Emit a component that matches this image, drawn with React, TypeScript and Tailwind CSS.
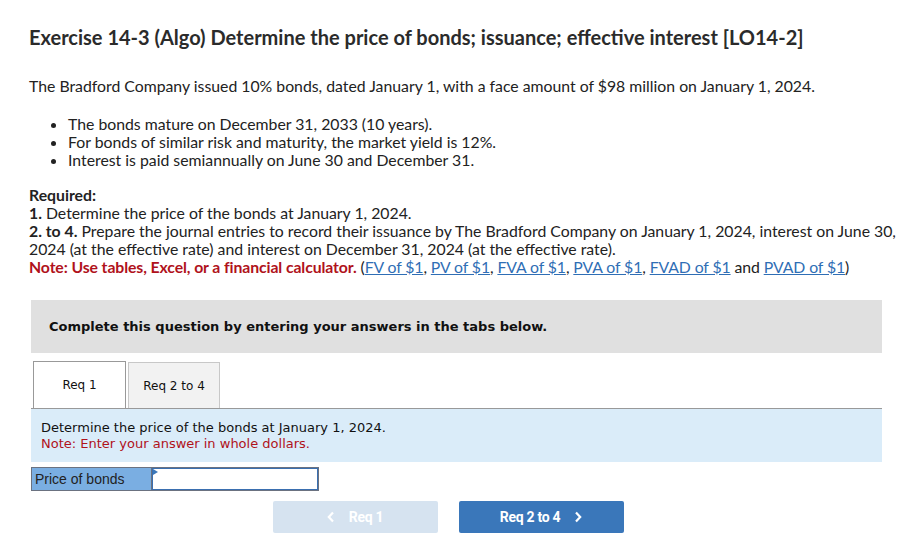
import React from 'react';

const links = ['FV of $1', 'PV of $1', 'FVA of $1', 'PVA of $1', 'FVAD of $1'];

const App: React.FC = () => {
  return (
    <div className="min-h-screen bg-white pl-[29px] pr-[10px] text-[#222] font-['Lato','Liberation_Sans',sans-serif]">
      {/* Header */}
      <h1 className="pt-[25px] text-[20px] font-bold leading-[24px] text-[#2b2b2b]">
        Exercise 14-3 (Algo) Determine the price of bonds; issuance; effective interest [LO14-2]
      </h1>

      <p className="mt-[28px] text-[15.8px] leading-[18px]">
        The Bradford Company issued 10% bonds, dated January 1, with a face amount of $98 million on January 1, 2024.
      </p>

      <ul className="mt-[20px] list-disc pl-[39px] text-[15.8px] leading-[18px]">
        <li>The bonds mature on December 31, 2033 (10 years).</li>
        <li>For bonds of similar risk and maturity, the market yield is 12%.</li>
        <li>Interest is paid semiannually on June 30 and December 31.</li>
      </ul>

      <div className="mt-[17px] text-[15.8px] leading-[18px]">
        <p className="font-bold">Required:</p>
        <p>
          <b>1.</b> Determine the price of the bonds at January 1, 2024.
        </p>
        <p>
          <b>2. to 4.</b> Prepare the journal entries to record their issuance by The Bradford Company on January 1, 2024, interest on June 30, 2024 (at the effective rate) and interest on December 31, 2024 (at the effective rate).
        </p>
        <p className="tracking-[-0.1px]">
          <b className="text-[#b0121b]">Note: Use tables, Excel, or a financial calculator.</b>{' '}
          (
          {links.map((l, i) => (
            <React.Fragment key={l}>
              <a className="text-[#2f6eb5] underline">{l}</a>
              {i < links.length - 1 ? ', ' : ''}
            </React.Fragment>
          ))}{' '}
          and <a className="text-[#2f6eb5] underline">PVAD of $1</a>)
        </p>
      </div>

      {/* Question panel */}
      <div className="ml-[2px] mr-[29px] mt-[24px] font-['DejaVu_Sans','Verdana',sans-serif]">
        <div className="flex h-[53px] items-center bg-[#e0e0e0] pl-[18px] text-[13px] font-bold text-[#111]">
          Complete this question by entering your answers in the tabs below.
        </div>

        <div className="mt-[8px] flex gap-[2px] border-b border-[#999] pl-[2px] text-[12px] text-[#111]">
          <div className="-mb-px flex h-[47px] w-[93px] items-center justify-center border border-b-0 border-[#999] bg-white">
            Req 1
          </div>
          <div className="mt-px flex h-[46px] w-[92px] items-center justify-center border border-b-0 border-[#c8c8c8] bg-[#f2f2f2]">
            Req 2 to 4
          </div>
        </div>

        <div className="bg-[#daecf9] px-[10px] pb-[10px] pt-[11px] text-[13px] leading-[16px]">
          <p className="text-[#111]">Determine the price of the bonds at January 1, 2024.</p>
          <p className="text-[#b0121b]">Note: Enter your answer in whole dollars.</p>
        </div>

        <div className="mt-[5px] flex h-[24px] w-[288px] border border-[#6b7280] font-['Liberation_Sans',Arial,sans-serif] text-[14px]">
          <div className="flex w-[120px] items-center border-r border-[#6b7280] bg-[#7aaee2] pl-[3px] text-[#222]">
            Price of bonds
          </div>
          <div className="relative flex-1 border border-[#3a6fb0] bg-white">
            <span className="absolute left-0 top-0 h-0 w-0 border-y-[3px] border-l-[5px] border-y-transparent border-l-[#3a77ba]" />
          </div>
        </div>

        <div className="mt-[10px] flex justify-center gap-[21px] pr-[17px] font-['Roboto','Liberation_Sans',sans-serif] text-[14px] font-bold text-white">
          <div className="flex h-[32px] w-[165px] items-center justify-center gap-[14px] rounded-[2px] bg-[#d6e3f0]">
            <svg width="8" height="12" viewBox="0 0 8 12" fill="none" stroke="white" strokeWidth="2.2">
              <path d="M6 1.5 L1.8 6 L6 10.5" />
            </svg>
            <span className="tracking-[-0.3px]">Req 1</span>
          </div>
          <div className="flex h-[32px] w-[165px] items-center justify-center gap-[14px] rounded-[2px] bg-[#3a77ba]">
            <span className="tracking-[-0.3px]">Req 2 to 4</span>
            <svg width="8" height="12" viewBox="0 0 8 12" fill="none" stroke="white" strokeWidth="2.2">
              <path d="M2 1.5 L6.2 6 L2 10.5" />
            </svg>
          </div>
        </div>
      </div>
    </div>
  );
};

export default App;
